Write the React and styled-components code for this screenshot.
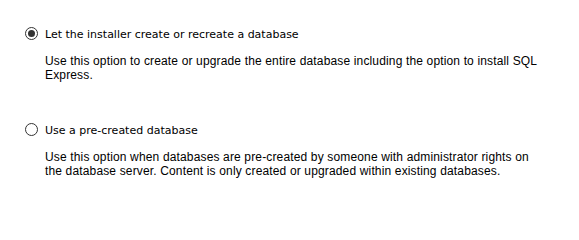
import React from "react";
import styled, { createGlobalStyle } from "styled-components";

const Global = createGlobalStyle`
  html, body { margin: 0; padding: 0; background: #ffffff; }
  body { width: 579px; height: 233px; overflow: hidden; }
`;

const Page = styled.div`
  display: flex;
  flex-direction: column;
  gap: 42px;
  padding: 28px 0 0 25px;
  background: #ffffff;
`;

const Option = styled.div`
  display: flex;
  flex-direction: column;
  gap: 12px;
`;

const Header = styled.label`
  display: flex;
  align-items: flex-start;
  gap: 7px;
  cursor: default;
`;

const Radio = styled.span`
  box-sizing: border-box;
  width: 13px;
  height: 13px;
  margin-top: -1px;
  border-radius: 50%;
  border: 1px solid #333333;
  background: #ffffff;
  display: flex;
  align-items: center;
  justify-content: center;
  flex: none;
  &::after {
    content: "";
    width: 7px;
    height: 7px;
    border-radius: 50%;
    background: ${(p) => (p.$checked ? "#333333" : "transparent")};
  }
`;

const Title = styled.span`
  font-family: "DejaVu Sans", Tahoma, sans-serif;
  font-size: 11px;
  line-height: 14px;
  color: #000000;
`;

const Description = styled.p`
  margin: 0 0 0 20px;
  width: 500px;
  font-family: "Liberation Sans", Arial, sans-serif;
  font-size: 12px;
  letter-spacing: 0.15px;
  line-height: 14px;
  color: #000000;
`;

const options = [
  {
    title: "Let the installer create or recreate a database",
    text: "Use this option to create or upgrade the entire database including the option to install SQL Express.",
    checked: true,
  },
  {
    title: "Use a pre-created database",
    text: "Use this option when databases are pre-created by someone with administrator rights on the database server. Content is only created or upgraded within existing databases.",
    checked: false,
  },
];

export default function App() {
  return (
    <>
      <Global />
      <Page>
        {options.map((o) => (
          <Option key={o.title}>
            <Header>
              <Radio $checked={o.checked} />
              <Title>{o.title}</Title>
            </Header>
            <Description>{o.text}</Description>
          </Option>
        ))}
      </Page>
    </>
  );
}
